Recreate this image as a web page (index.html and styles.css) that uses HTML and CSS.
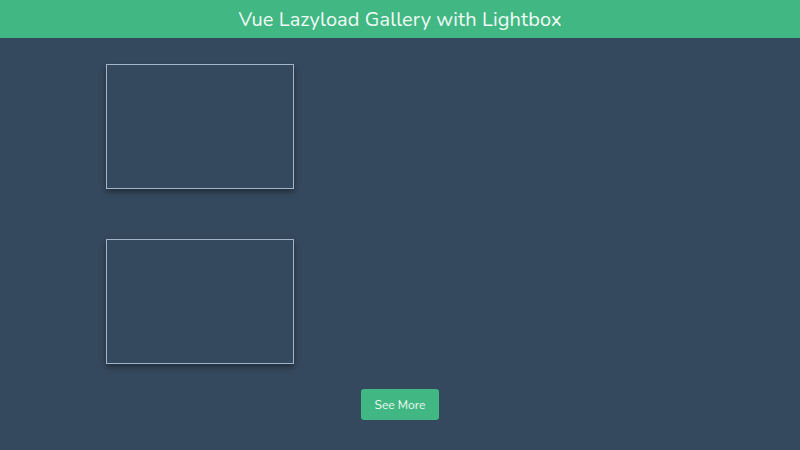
FILE: index.html
```html
<!DOCTYPE html>
<html lang="en">
<head>
<meta charset="utf-8">
<title>Vue Lazyload Gallery with Lightbox</title>
<link rel="stylesheet" href="styles.css">
</head>
<body>
  <header class="topbar">
    <h1 class="topbar-title">Vue Lazyload Gallery with Lightbox</h1>
  </header>
  <main class="page">
    <section class="gallery">
      <div class="thumb"></div>
      <div class="thumb"></div>
    </section>
    <div class="actions">
      <button class="btn-more" type="button">See More</button>
    </div>
  </main>
</body>
</html>
```
FILE: styles.css
```css
html, body {
  margin: 0;
  padding: 0;
}

body {
  background: #35495e;
  font-family: "Nunito", "Lato", "Open Sans", sans-serif;
  color: #ffffff;
  height: 450px;
  overflow: hidden;
}

.topbar {
  background: #41b883;
  height: 38px;
  display: flex;
  align-items: center;
  justify-content: center;
}

.topbar-title {
  margin: 0;
  font-size: 20px;
  font-weight: 400;
  color: #f2faf6;
  letter-spacing: 0.1px;
}

.page {
  padding-top: 26px;
  display: flex;
  flex-direction: column;
}

.gallery {
  padding-left: 106px;
  display: flex;
  flex-direction: column;
  gap: 50px;
}

/* placeholder frame shown before an image loads */
.thumb {
  width: 186px;
  height: 123px;
  border: 1px solid #a3b6c9;
  box-shadow: 0 3px 6px rgba(0, 0, 0, 0.4);
}

.actions {
  display: flex;
  justify-content: center;
  padding-top: 25px;
}

.btn-more {
  width: 78px;
  height: 31px;
  background: #41b883;
  color: #eef8f2;
  border: none;
  border-radius: 3px;
  font-family: inherit;
  font-size: 12px;
  cursor: pointer;
}
```
